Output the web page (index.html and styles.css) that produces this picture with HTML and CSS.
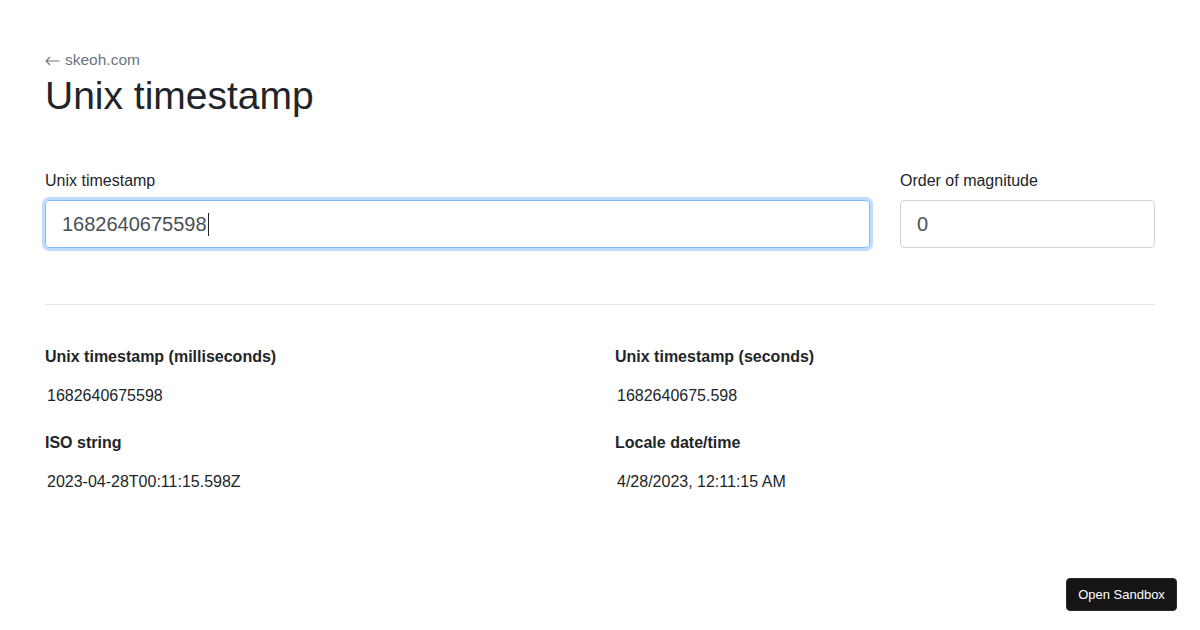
FILE: index.html
```html
<!DOCTYPE html>
<html lang="en">
<head>
<meta charset="utf-8">
<title>Unix timestamp</title>
<link rel="stylesheet" href="styles.css">
</head>
<body>
<div class="container">
  <a class="back" href="#"><svg class="arrow" width="15" height="10" viewBox="0 0 15 10" aria-hidden="true"><path d="M14.5 5H1M5 1L1 5L5 9" fill="none" stroke="#6c757d" stroke-width="1.1"/></svg>skeoh.com</a>
  <h1 class="title">Unix timestamp</h1>
  <div class="inputs">
    <div class="field field-main">
      <label class="label">Unix timestamp</label>
      <div class="control focused"><span>1682640675598</span><span class="caret"></span></div>
    </div>
    <div class="field field-side">
      <label class="label">Order of magnitude</label>
      <div class="control"><span>0</span></div>
    </div>
  </div>
  <hr class="divider">
  <div class="results">
    <div class="result">
      <div class="result-label">Unix timestamp (milliseconds)</div>
      <div class="result-value">1682640675598</div>
    </div>
    <div class="result">
      <div class="result-label">Unix timestamp (seconds)</div>
      <div class="result-value">1682640675.598</div>
    </div>
    <div class="result">
      <div class="result-label">ISO string</div>
      <div class="result-value">2023-04-28T00:11:15.598Z</div>
    </div>
    <div class="result">
      <div class="result-label">Locale date/time</div>
      <div class="result-value">4/28/2023, 12:11:15 AM</div>
    </div>
  </div>
</div>
<button class="sandbox">Open Sandbox</button>
</body>
</html>
```
FILE: styles.css
```css
* { box-sizing: border-box; }
html, body { margin: 0; padding: 0; background: #fff; }
body {
  font-family: "Liberation Sans", Arial, Helvetica, sans-serif;
  color: #212529;
  font-size: 16px;
  line-height: 1.5;
}
.container {
  width: 1110px;
  margin: 0 auto;
  padding-top: 48px;
}
.back {
  display: flex;
  align-items: center;
  color: #6c757d;
  text-decoration: none;
  font-size: 15.5px;
  line-height: 24px;
}
.arrow {
  margin-right: 5px;
  margin-top: 2px;
}
.title {
  margin: 0;
  font-size: 39px;
  font-weight: 400;
  line-height: 48px;
  margin-top: 0;
}
.inputs {
  display: flex;
  gap: 30px;
  margin-top: 49px;
}
.field-main { width: 825px; }
.field-side { width: 255px; }
.label {
  display: block;
  margin-bottom: 7px;
  font-size: 16px;
  line-height: 24px;
}
.control {
  height: 48px;
  border: 1px solid #ced4da;
  border-radius: 4px;
  padding: 0 16px;
  font-size: 20px;
  line-height: 46px;
  color: #495057;
  display: flex;
  align-items: center;
}
.control.focused {
  border-color: #80bdff;
  box-shadow: 0 0 0 3px rgba(0, 123, 255, 0.25);
}
.caret {
  display: inline-block;
  width: 1px;
  height: 23px;
  background: #212529;
  margin-left: 1px;
}
.divider {
  margin: 56px 0 0;
  border: 0;
  border-top: 1px solid rgba(0, 0, 0, 0.1);
}
.results {
  display: grid;
  grid-template-columns: 540px 540px;
  column-gap: 30px;
  margin-top: 40px;
}
.result { margin-bottom: 23px; }
.result-label {
  font-weight: 700;
  line-height: 24px;
}
.result-value {
  padding-left: 2px;
  line-height: 24px;
  margin-top: 15px;
}
.sandbox {
  position: fixed;
  right: 23px;
  bottom: 19px;
  width: 111px;
  height: 33px;
  background: #151515;
  color: #fff;
  border: 1px solid #2a2a2a;
  border-radius: 4px;
  font-family: "Liberation Sans", Arial, sans-serif;
  font-size: 13px;
  padding: 0;
}
```
